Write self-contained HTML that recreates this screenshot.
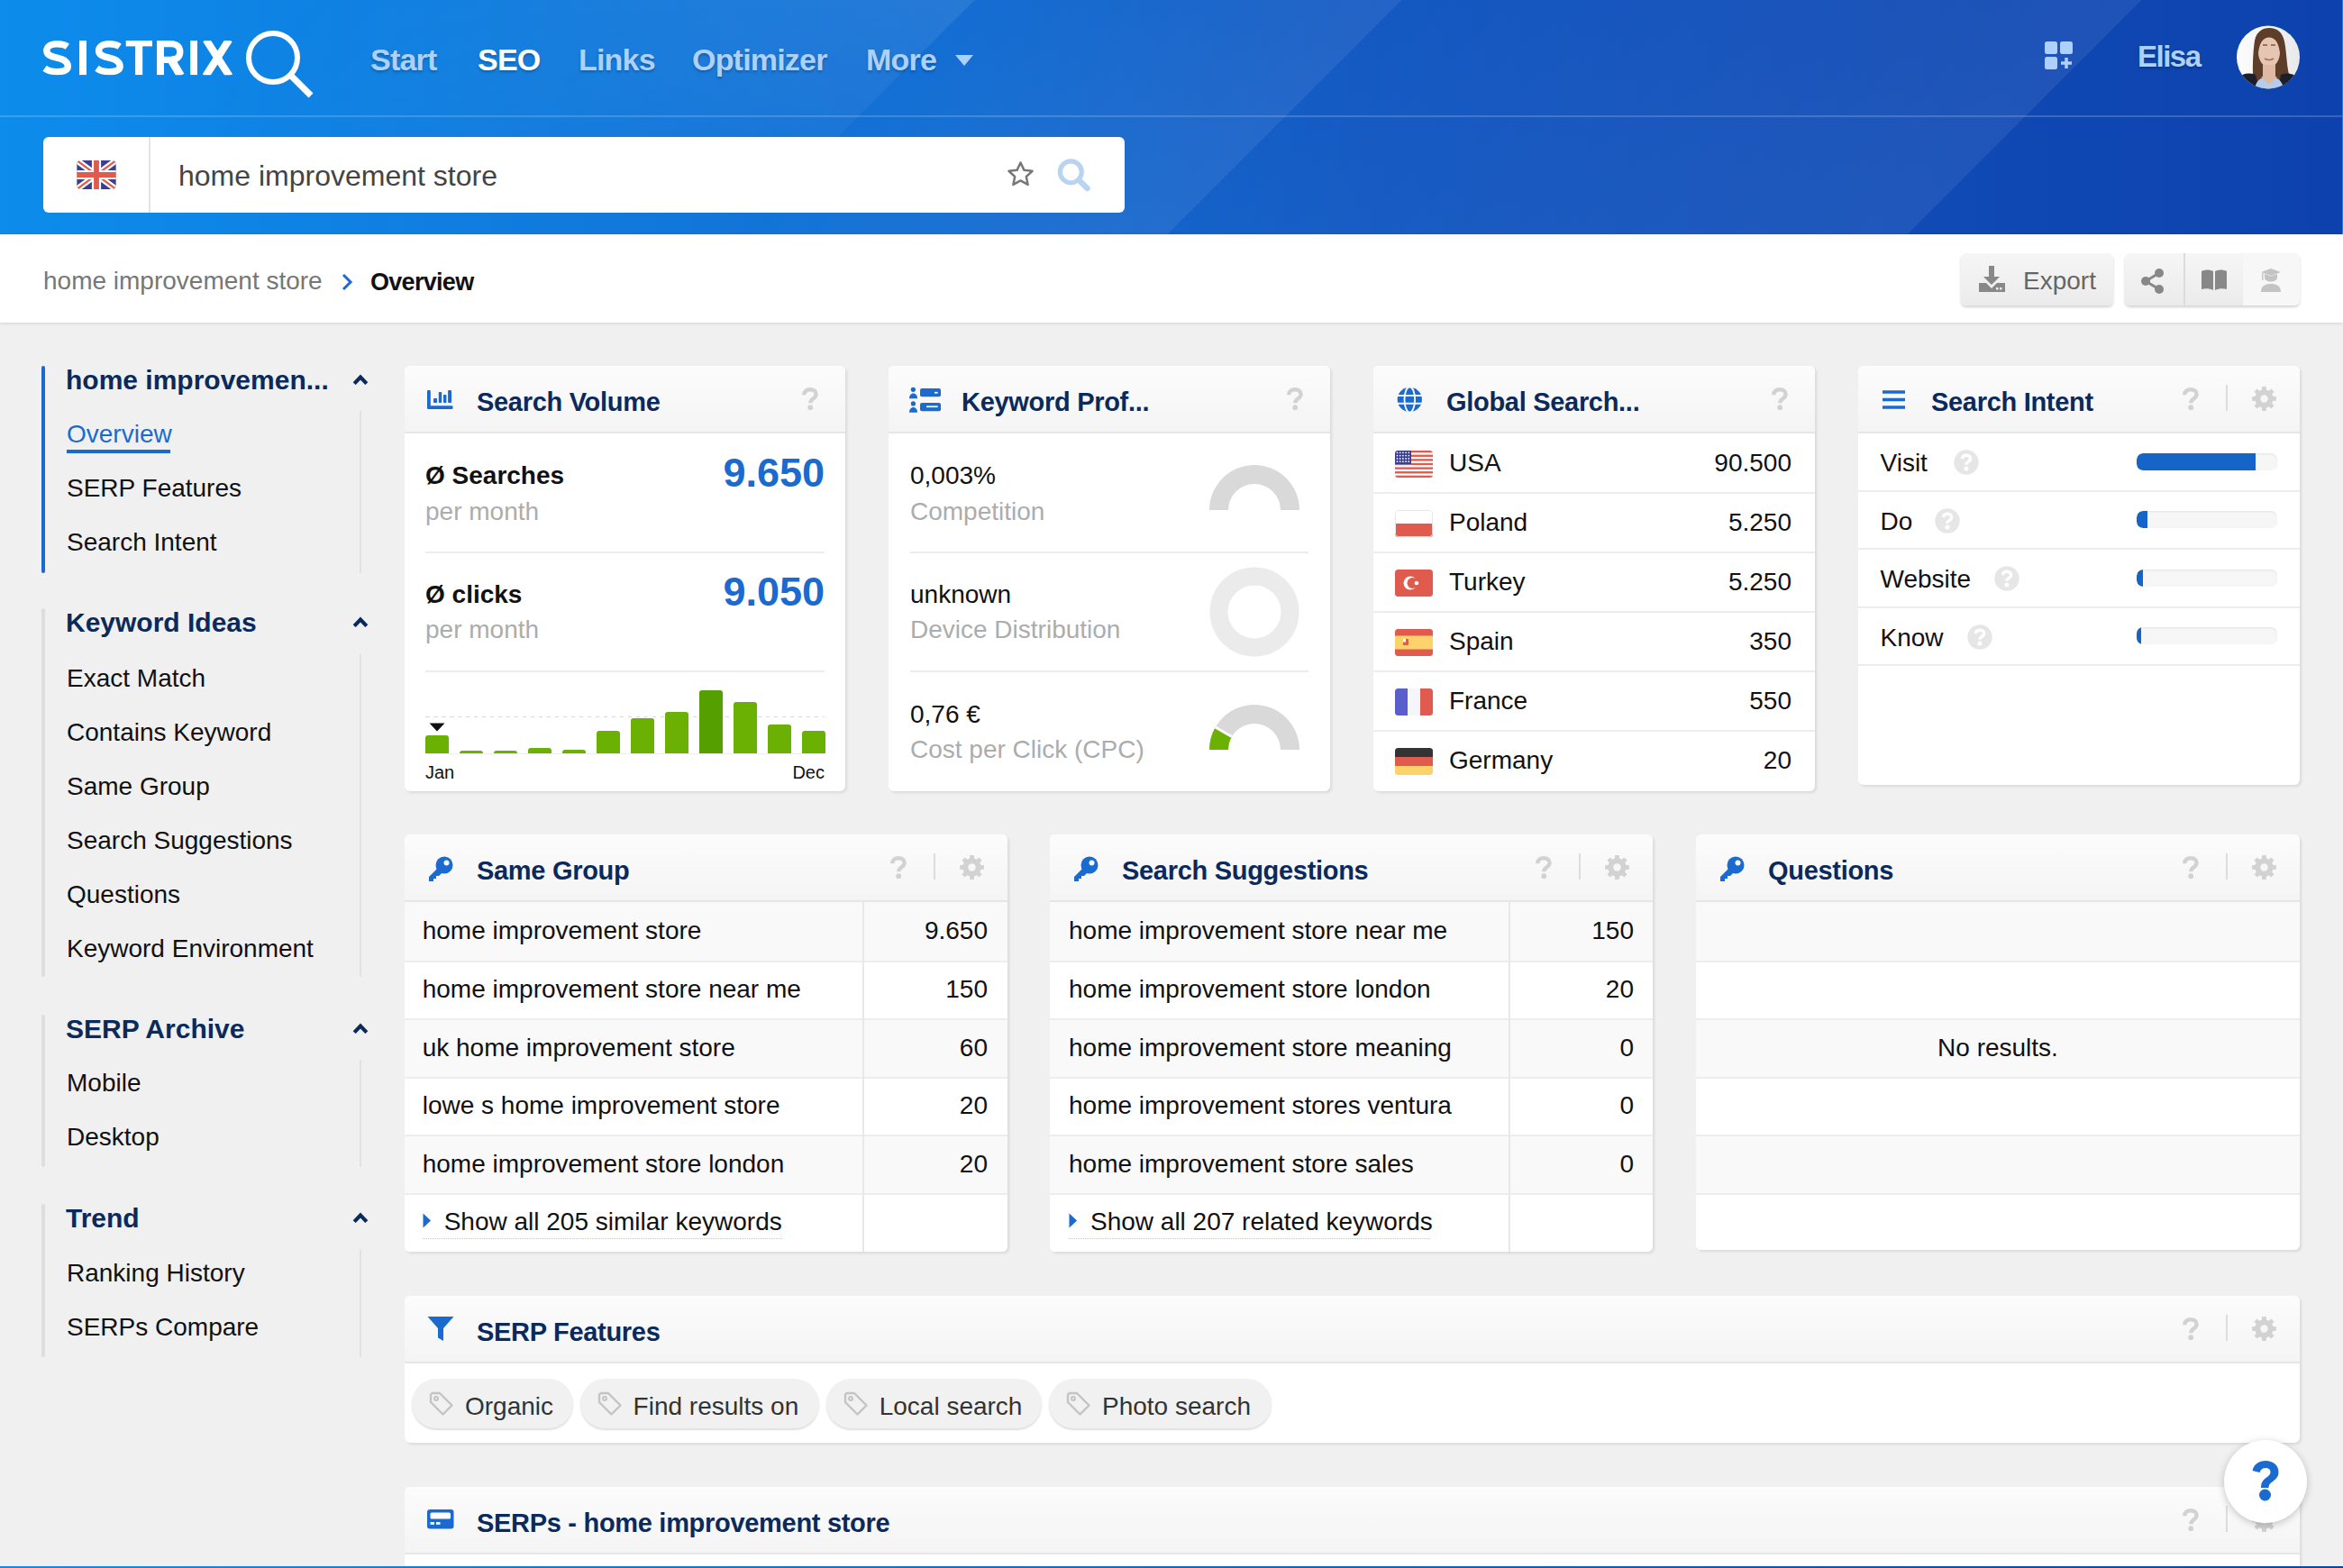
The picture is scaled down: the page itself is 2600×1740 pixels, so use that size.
<!DOCTYPE html>
<html><head><meta charset="utf-8">
<style>
*{box-sizing:border-box;margin:0;padding:0}
html,body{width:2600px;height:1740px;overflow:hidden}
body{position:relative;background:#f0f0f0;font-family:"Liberation Sans",sans-serif;color:#111;font-size:28px}
.abs{position:absolute}
.t{position:absolute;white-space:nowrap;line-height:28px}
/* header */
#hdr{position:absolute;left:0;top:0;width:2600px;height:260px;overflow:hidden;
 background:
  linear-gradient(135deg, rgba(255,255,255,0) 38%, rgba(255,255,255,0.065) 54.4%, rgba(255,255,255,0) 54.4%, rgba(255,255,255,0) 55%, rgba(255,255,255,0.07) 83.1%, rgba(255,255,255,0) 83.1%),
  linear-gradient(90deg,#0c8cec 0%,#146dd2 41.6%,#1459c2 58.8%,#0f47b2 88%,#0d42ae 100%);}
#hdr .band1{position:absolute;left:0;top:0;width:2600px;height:260px;
 background:linear-gradient(135deg, rgba(255,255,255,0) 12%, rgba(255,255,255,0.085) 37.8%, rgba(255,255,255,0) 37.8%);
 -webkit-mask-image:linear-gradient(to bottom,#000 0%,rgba(0,0,0,0.55) 45%,rgba(0,0,0,0) 85%);mask-image:linear-gradient(to bottom,#000 0%,rgba(0,0,0,0.55) 45%,rgba(0,0,0,0) 85%)}
#hdr .line{position:absolute;left:0;top:128px;width:2600px;height:2px;background:rgba(255,255,255,0.18)}
.nav{position:absolute;top:54px;font-weight:bold;font-size:34px;line-height:34px;letter-spacing:-0.8px;color:#aed1fb;text-shadow:0 2px 3px rgba(0,0,0,0.25)}
#search{position:absolute;left:48px;top:152px;width:1200px;height:84px;background:#fff;border-radius:6px}
#crumb{position:absolute;left:0;top:260px;width:2600px;height:98px;background:#fff;box-shadow:0 1px 3px rgba(0,0,0,0.12)}
.btn{position:absolute;background:linear-gradient(#f6f6f6,#ebebeb);border-radius:6px;box-shadow:0 2px 3px rgba(0,0,0,0.18)}
/* sidebar */
.sbar{position:absolute;left:46px;width:4px;background:#dedede;border-radius:2px}
.sline{position:absolute;left:399px;width:2px;background:#e2e2e2}
.shead{position:absolute;left:73px;font-weight:bold;font-size:30px;line-height:30px;color:#0b2a5c;white-space:nowrap}
.sitem{position:absolute;left:74px;font-size:28px;line-height:28px;color:#111;white-space:nowrap}
.chev{position:absolute;left:391px;width:18px;height:12px}
/* cards */
.card{position:absolute;background:#fff;border-radius:6px;box-shadow:2px 2px 3px rgba(0,0,0,0.09);overflow:hidden}
.ch{position:absolute;left:0;top:0;right:0;height:75px;background:linear-gradient(#fcfcfc,#f4f4f4);border-bottom:2px solid #e6e6e6}
.ctitle{position:absolute;top:28px;left:80px;font-weight:bold;font-size:28px;line-height:28px;color:#0b2a5c;white-space:nowrap}
</style></head><body>

<div id="hdr">
  <div class="band1"></div>
  <div class="line"></div>
  <svg class="abs" style="left:40px;top:40px" width="230" height="50" viewBox="40 40 230 50"><defs><clipPath id="lgc"><rect x="40" y="45" width="230" height="38.3"/></clipPath></defs><g clip-path="url(#lgc)"><path transform="translate(0 0)" d="M74.8 51.8 C71.5 49.4 67.5 48.8 63.2 48.8 C56.2 48.8 51.8 51.6 51.8 56.2 C51.8 61 56.2 62.6 63.2 64.1 C70.6 65.7 75.3 68.2 75.3 73.6 C75.3 78.4 70.6 79.7 63.2 79.7 C58 79.7 53.4 78.6 49.6 75.8" fill="none" stroke="#fff" stroke-width="7.4"/><rect x="88" y="45" width="8" height="38.3" fill="#fff"/><path transform="translate(57.8 0)" d="M74.8 51.8 C71.5 49.4 67.5 48.8 63.2 48.8 C56.2 48.8 51.8 51.6 51.8 56.2 C51.8 61 56.2 62.6 63.2 64.1 C70.6 65.7 75.3 68.2 75.3 73.6 C75.3 78.4 70.6 79.7 63.2 79.7 C58 79.7 53.4 78.6 49.6 75.8" fill="none" stroke="#fff" stroke-width="7.4"/><rect x="139.7" y="45" width="29.3" height="6.4" fill="#fff"/><rect x="150.1" y="45" width="8.1" height="38.3" fill="#fff"/><rect x="174" y="45" width="8" height="38.3" fill="#fff"/><path d="M176 48.6 H189.5 C196.5 48.6 199.8 52.4 199.8 57.6 C199.8 63 196.2 66.4 189.5 66.4 H176" fill="none" stroke="#fff" stroke-width="7.2"/><path d="M188.5 64 L200.5 84" stroke="#fff" stroke-width="9"/><rect x="211.2" y="45" width="7.8" height="38.3" fill="#fff"/><path d="M228.6 44 L254.6 84.5 M254.2 44 L228.2 84.5" stroke="#fff" stroke-width="8.2"/></g></svg>
  <svg class="abs" style="left:265px;top:26px" width="92" height="92" viewBox="265 26 92 92">
    <circle cx="303" cy="64" r="27" fill="none" stroke="#fff" stroke-width="6"/>
    <line x1="323" y1="84" x2="345" y2="106" stroke="#fff" stroke-width="7"/>
  </svg>
  <div class="nav" style="left:411px;top:49.2px">Start</div>
  <div class="nav" style="left:530px;top:49.2px;color:#fff">SEO</div>
  <div class="nav" style="left:642px;top:49.2px">Links</div>
  <div class="nav" style="left:768px;top:49.2px">Optimizer</div>
  <div class="nav" style="left:961px;top:49.2px">More</div>
  <svg class="abs" style="left:1058px;top:59px" width="24" height="16"><path d="M2 2 L22 2 L12 14 Z" fill="#aed1fb"/></svg>
  <svg class="abs" style="left:2266px;top:43px" width="38" height="36">
    <rect x="3" y="3" width="14" height="14" rx="2.5" fill="#aed1fb"/>
    <rect x="20" y="3" width="14" height="14" rx="2.5" fill="#aed1fb"/>
    <rect x="3" y="20" width="14" height="14" rx="2.5" fill="#aed1fb"/>
    <path d="M27 21 V33 M21 27 H33" stroke="#aed1fb" stroke-width="3.5"/>
  </svg>
  <div class="nav" style="left:2372px;top:45.6px;font-size:33px;line-height:33px;letter-spacing:-1.5px">Elisa</div>
  <svg class="abs" style="left:2481px;top:28px" width="72" height="72" viewBox="0 0 72 72">
    <defs><clipPath id="av"><circle cx="36" cy="35.5" r="35"/></clipPath>
    <linearGradient id="avbg" x1="0" x2="1"><stop offset="0" stop-color="#fdfdfd"/><stop offset="1" stop-color="#e9e9ea"/></linearGradient></defs>
    <g clip-path="url(#av)">
      <rect width="72" height="72" fill="url(#avbg)"/>
      <path d="M20 72 C18 52 19 30 21 17 C23 7 30 3 37 3 C46 3 52 8 54 18 C57 32 56 50 62 64 L50 72 Z" fill="#5e3d2a"/>
      <ellipse cx="37" cy="30" rx="12" ry="16.5" fill="#e6c6b2"/>
      <path d="M23 28 C24 12 30 6 37 6 L36 12 C31 13 27 18 25 30 Z" fill="#5e3d2a"/>
      <path d="M51 28 C50 12 44 6 37 6 L38 12 C43 13 47 18 49 30 Z" fill="#5e3d2a"/>
      <path d="M30 22 H35 M39 22 H44" stroke="#7a5845" stroke-width="1.6"/>
      <path d="M32 37 Q37 40 42 37" stroke="#a0705e" stroke-width="1.5" fill="none"/>
      <rect x="30" y="44" width="14" height="14" fill="#e0b9a2"/>
      <path d="M0 72 V60 C6 54 14 52 22 55 L26 72 Z" fill="#1c1e2a"/>
      <path d="M72 72 V60 C66 54 58 52 50 55 L47 72 Z" fill="#1c1e2a"/>
      <path d="M21 72 C22 62 27 57 37 57 C47 57 52 62 53 72 Z" fill="#b5cdea"/>
      <path d="M28 57 L37 66 L46 57 Z" fill="#e0b9a2"/>
    </g>
  </svg>
</div>

<div id="search">
  <div class="abs" style="left:117px;top:0;width:2px;height:84px;background:#e3e3e3"></div>
  <svg class="abs" style="left:37px;top:26px" width="44" height="32" viewBox="0 0 60 44">
    <defs><clipPath id="ukc"><rect width="60" height="44" rx="6"/></clipPath></defs>
    <g clip-path="url(#ukc)">
      <rect width="60" height="44" fill="#3b3f93"/>
      <path d="M0 0 L60 44 M60 0 L0 44" stroke="#fff" stroke-width="9"/>
      <path d="M0 0 L60 44 M60 0 L0 44" stroke="#e05a4e" stroke-width="3"/>
      <path d="M30 0 V44 M0 22 H60" stroke="#fff" stroke-width="14"/>
      <path d="M30 0 V44 M0 22 H60" stroke="#e05a4e" stroke-width="8"/>
    </g>
  </svg>
  <div class="t" style="left:150px;top:27px;font-size:32px;line-height:32px;color:#444">home improvement store</div>
  <svg class="abs" style="left:1068px;top:25px" width="33" height="34" viewBox="0 0 24 24.7">
    <path d="M12 2.5 L14.9 8.6 L21.5 9.3 L16.6 13.8 L17.9 20.3 L12 17 L6.1 20.3 L7.4 13.8 L2.5 9.3 L9.1 8.6 Z" fill="none" stroke="#777" stroke-width="1.8" stroke-linejoin="round"/>
  </svg>
  <svg class="abs" style="left:1125px;top:23px" width="40" height="40" viewBox="0 0 40 40">
    <circle cx="15.3" cy="15.8" r="12" fill="none" stroke="#b9d4f0" stroke-width="5.2"/>
    <line x1="24.5" y1="25" x2="33.5" y2="34" stroke="#b9d4f0" stroke-width="6.4" stroke-linecap="round"/>
  </svg>
</div>

<div id="crumb">
  <div class="t" style="left:48px;top:38px;color:#777">home improvement store</div>
  <svg class="abs" style="left:376px;top:42px" width="18" height="22"><path d="M5 3 L13 11 L5 19" fill="none" stroke="#1a6ad0" stroke-width="3"/></svg>
  <div class="t" style="left:411px;top:39px;font-weight:bold;font-size:27px;letter-spacing:-0.7px;color:#111">Overview</div>
  <div class="btn" style="left:2176px;top:21px;width:169px;height:58px">
    <svg class="abs" style="left:19px;top:13px" width="32" height="32" viewBox="0 0 32 32">
      <path d="M12 1 H18 V13 H24 L15 22 L6 13 H12 Z" fill="#888"/>
      <path d="M1 20 H9 L15 26 L21 20 H30 V30 H1 Z" fill="#888"/>
      <rect x="20" y="25" width="2.5" height="2.5" fill="#eee"/><rect x="24" y="25" width="2.5" height="2.5" fill="#eee"/>
    </svg>
    <div class="t" style="left:69px;top:17px;color:#666">Export</div>
  </div>
  <div class="btn" style="left:2358px;top:21px;width:194px;height:58px">
    <div class="abs" style="left:65px;top:0;width:2px;height:58px;background:#dcdcdc"></div>
    <div class="abs" style="left:131px;top:0;width:63px;height:58px;background:#f7f7f7;border-radius:0 6px 6px 0"></div>
    <svg class="abs" style="left:17px;top:16px" width="28" height="30" viewBox="0 0 28 30">
      <circle cx="21" cy="6" r="5" fill="#888"/><circle cx="6" cy="15" r="5" fill="#888"/><circle cx="21" cy="24" r="5" fill="#888"/>
      <path d="M21 6 L6 15 L21 24" fill="none" stroke="#888" stroke-width="3"/>
    </svg>
    <svg class="abs" style="left:84px;top:18px" width="30" height="24" viewBox="0 0 30 24">
      <path d="M1 2 C5 0 10 0 14 2 V23 C10 21 5 21 1 22 Z" fill="#888"/>
      <path d="M29 2 C25 0 20 0 16 2 V23 C20 21 25 21 29 22 Z" fill="#888"/>
    </svg>
    <svg class="abs" style="left:149px;top:16px" width="26" height="28" viewBox="0 0 26 28">
      <path d="M2 5 L13 1 L24 5 L13 9 Z" fill="#c4c4c4"/>
      <path d="M6 7 V11 C6 17 20 17 20 11 V7 L13 9.5 Z" fill="#c4c4c4"/>
      <rect x="3" y="6" width="1.5" height="8" fill="#c4c4c4"/>
      <path d="M2 27 C2 20 7 18 13 18 C19 18 24 20 24 27 Z" fill="#c4c4c4"/>
    </svg>
  </div>
</div>


<!-- sidebar -->
<div class="sbar" style="top:406px;height:230px;background:#1a6ad0"></div>
<div class="sline" style="top:456px;height:180px"></div>
<div class="shead" style="top:406.6px">home improvemen...</div>
<svg class="chev" style="top:415px" viewBox="0 0 18 12"><path d="M2.2 10.6 L9 3.6 L15.8 10.6" fill="none" stroke="#0b2a5c" stroke-width="4.2"/></svg>
<div class="sitem" style="top:468.3px;color:#1a6ad0">Overview</div>
<div class="abs" style="left:74px;top:499px;width:115px;height:4px;background:#1a6ad0"></div>
<div class="sitem" style="top:528.3px">SERP Features</div>
<div class="sitem" style="top:588.3px">Search Intent</div>
<div class="sbar" style="top:675px;height:409px"></div>
<div class="sline" style="top:726px;height:358px"></div>
<div class="shead" style="top:675.6px">Keyword Ideas</div>
<svg class="chev" style="top:684px" viewBox="0 0 18 12"><path d="M2.2 10.6 L9 3.6 L15.8 10.6" fill="none" stroke="#0b2a5c" stroke-width="4.2"/></svg>
<div class="sitem" style="top:739.3px">Exact Match</div>
<div class="sitem" style="top:799.3px">Contains Keyword</div>
<div class="sitem" style="top:859.3px">Same Group</div>
<div class="sitem" style="top:919.3px">Search Suggestions</div>
<div class="sitem" style="top:979.3px">Questions</div>
<div class="sitem" style="top:1039.3px">Keyword Environment</div>
<div class="sbar" style="top:1126px;height:169px"></div>
<div class="sline" style="top:1176px;height:119px"></div>
<div class="shead" style="top:1126.6px">SERP Archive</div>
<svg class="chev" style="top:1135px" viewBox="0 0 18 12"><path d="M2.2 10.6 L9 3.6 L15.8 10.6" fill="none" stroke="#0b2a5c" stroke-width="4.2"/></svg>
<div class="sitem" style="top:1188.3px">Mobile</div>
<div class="sitem" style="top:1248.3px">Desktop</div>
<div class="sbar" style="top:1336px;height:170px"></div>
<div class="sline" style="top:1386px;height:120px"></div>
<div class="shead" style="top:1336.6px">Trend</div>
<svg class="chev" style="top:1345px" viewBox="0 0 18 12"><path d="M2.2 10.6 L9 3.6 L15.8 10.6" fill="none" stroke="#0b2a5c" stroke-width="4.2"/></svg>
<div class="sitem" style="top:1399.3px">Ranking History</div>
<div class="sitem" style="top:1459.3px">SERPs Compare</div>

<!-- cards -->
<div class="card" style="left:449px;top:406px;width:489px;height:472px"><div class="ch"></div><svg class="abs" style="left:25px;top:27px" width="30" height="22" viewBox="0 0 30 22"><path d="M0 1 Q0 0 1 0 H2.8 Q3.8 0 3.8 1 V17.2 H27.6 Q28.6 17.2 28.6 19.1 Q28.6 21 27.6 21 H1 Q0 21 0 20 Z" fill="#1a6ad0"/><rect x="7" y="9" width="4" height="5" rx="0.8" fill="#1a6ad0"/><rect x="12.8" y="2" width="3.4" height="12" rx="0.8" fill="#1a6ad0"/><rect x="18" y="5" width="3.4" height="9" rx="0.8" fill="#1a6ad0"/><rect x="23.1" y="0" width="3.9" height="14" rx="0.9" fill="#1a6ad0"/></svg><div class="ctitle" style="left:80px;top:25.5px;font-size:29px;line-height:29px;letter-spacing:-0.3px">Search Volume</div><svg class="abs" style="left:440px;top:23.5px" width="20" height="26" viewBox="0 0 20 26"><path d="M3.2 8.2 C3.2 4.2 6.2 2.2 10 2.2 C14 2.2 16.6 4.6 16.6 7.6 C16.6 10.6 14.2 11.8 12.6 13 C11 14.2 10.4 15.2 10.4 17.2" fill="none" stroke="#d2d2d2" stroke-width="4.4"/><circle cx="10.2" cy="22.2" r="2.9" fill="#d2d2d2"/></svg>
<div class="t" style="left:23.0px;top:107.9px;font-size:28px;line-height:28px;color:#111;font-weight:bold;">&Oslash; Searches</div>
<div class="t" style="left:23.0px;top:147.8px;font-size:28px;line-height:28px;color:#acacac;font-weight:normal;">per month</div>
<div class="t" style="right:23px;top:96.4px;font-size:45px;line-height:45px;font-weight:bold;color:#1a6ad0">9.650</div>
<div class="abs" style="left:23px;top:205.5px;width:443px;height:2px;background:#ececec"></div>
<div class="t" style="left:23.0px;top:240.3px;font-size:28px;line-height:28px;color:#111;font-weight:bold;">&Oslash; clicks</div>
<div class="t" style="left:23.0px;top:279.3px;font-size:28px;line-height:28px;color:#acacac;font-weight:normal;">per month</div>
<div class="t" style="right:23px;top:227.9px;font-size:45px;line-height:45px;font-weight:bold;color:#1a6ad0">9.050</div>
<div class="abs" style="left:23px;top:337.5px;width:443px;height:2px;background:#ececec"></div>
<div class="abs" style="left:23px;top:388.5px;width:443px;height:1.5px;background:repeating-linear-gradient(90deg,#d8d8d8 0 4.5px,transparent 4.5px 9px)"></div>
<div class="abs" style="left:23.0px;top:409.6px;width:26px;height:20.1px;background:#6ab104;border-radius:3px 3px 0 0"></div>
<div class="abs" style="left:60.5px;top:426.5px;width:26px;height:3.2px;background:#6ab104;border-radius:3px 3px 0 0"></div>
<div class="abs" style="left:98.7px;top:426.5px;width:26px;height:3.2px;background:#6ab104;border-radius:3px 3px 0 0"></div>
<div class="abs" style="left:137.0px;top:424.0px;width:26px;height:5.7px;background:#6ab104;border-radius:3px 3px 0 0"></div>
<div class="abs" style="left:175.0px;top:425.5px;width:26px;height:4.2px;background:#6ab104;border-radius:3px 3px 0 0"></div>
<div class="abs" style="left:213.0px;top:404.8px;width:26px;height:24.9px;background:#6ab104;border-radius:3px 3px 0 0"></div>
<div class="abs" style="left:250.8px;top:391.4px;width:26px;height:38.3px;background:#6ab104;border-radius:3px 3px 0 0"></div>
<div class="abs" style="left:289.0px;top:384.0px;width:26px;height:45.7px;background:#6ab104;border-radius:3px 3px 0 0"></div>
<div class="abs" style="left:327.3px;top:360.0px;width:26px;height:69.7px;background:#559f00;border-radius:3px 3px 0 0"></div>
<div class="abs" style="left:364.6px;top:373.0px;width:26px;height:56.7px;background:#6ab104;border-radius:3px 3px 0 0"></div>
<div class="abs" style="left:402.9px;top:398.4px;width:26px;height:31.3px;background:#6ab104;border-radius:3px 3px 0 0"></div>
<div class="abs" style="left:441.0px;top:404.8px;width:26px;height:24.9px;background:#6ab104;border-radius:3px 3px 0 0"></div>
<div class="abs" style="left:23px;top:429.7px;width:443px;height:1px;background:#eee"></div>
<svg class="abs" style="left:27px;top:396px" width="18" height="10" viewBox="0 0 18 10"><path d="M0.5 0.5 H17.5 L9 9.5 Z" fill="#111"/></svg>
<div class="t" style="left:23.0px;top:440.5px;font-size:20px;line-height:20px;color:#111;font-weight:normal;">Jan</div>
<div class="t" style="right:23px;top:440.5px;font-size:20px;line-height:20px">Dec</div>
</div>
<div class="card" style="left:986px;top:406px;width:490px;height:472px"><div class="ch"></div><svg class="abs" style="left:23px;top:24px" width="36" height="29" viewBox="0 0 36 29"><circle cx="4.4" cy="2.3" r="2.6" fill="#1a6ad0"/><path d="M0 12.2 C0 8.6 2 6.4 4.5 6.4 C7 6.4 9 8.6 9 12.2 Z" fill="#1a6ad0"/><circle cx="4.4" cy="17.9" r="2.6" fill="#1a6ad0"/><path d="M0 27.8 C0 24.2 2 22 4.5 22 C7 22 9 24.2 9 27.8 Z" fill="#1a6ad0"/><rect x="12" y="1" width="23" height="9.2" rx="2" fill="#1a6ad0"/><rect x="28" y="4.9" width="3.7" height="1.7" fill="#fff"/><rect x="12" y="17" width="23" height="9.2" rx="2" fill="#1a6ad0"/><rect x="19" y="20.4" width="12.7" height="1.7" fill="#fff"/></svg><div class="ctitle" style="left:81px;top:25.5px;font-size:29px;line-height:29px;letter-spacing:-0.3px">Keyword Prof...</div><svg class="abs" style="left:441px;top:23.5px" width="20" height="26" viewBox="0 0 20 26"><path d="M3.2 8.2 C3.2 4.2 6.2 2.2 10 2.2 C14 2.2 16.6 4.6 16.6 7.6 C16.6 10.6 14.2 11.8 12.6 13 C11 14.2 10.4 15.2 10.4 17.2" fill="none" stroke="#d2d2d2" stroke-width="4.4"/><circle cx="10.2" cy="22.2" r="2.9" fill="#d2d2d2"/></svg>
<div class="t" style="left:24.0px;top:107.9px;font-size:28px;line-height:28px;color:#111;font-weight:normal;">0,003%</div>
<div class="t" style="left:24.0px;top:147.8px;font-size:28px;line-height:28px;color:#acacac;font-weight:normal;">Competition</div>
<div class="abs" style="left:24px;top:205.5px;width:442px;height:2px;background:#ececec"></div>
<div class="t" style="left:24.0px;top:240.3px;font-size:28px;line-height:28px;color:#111;font-weight:normal;">unknown</div>
<div class="t" style="left:24.0px;top:279.3px;font-size:28px;line-height:28px;color:#acacac;font-weight:normal;">Device Distribution</div>
<div class="abs" style="left:24px;top:337.5px;width:442px;height:2px;background:#ececec"></div>
<div class="t" style="left:24.0px;top:373.3px;font-size:28px;line-height:28px;color:#111;font-weight:normal;">0,76 &euro;</div>
<div class="t" style="left:24.0px;top:412.3px;font-size:28px;line-height:28px;color:#acacac;font-weight:normal;">Cost per Click (CPC)</div>
<svg class="abs" style="left:356px;top:110px" width="100" height="52" viewBox="0 0 100 52"><path d="M0 50 A50 50 0 0 1 100 50 H79 A29 29 0 0 0 21 50 Z" fill="#d9d9d9"/></svg>
<svg class="abs" style="left:356px;top:222.5px" width="100" height="100" viewBox="0 0 100 100"><circle cx="50" cy="50" r="39.5" fill="none" stroke="#ebebeb" stroke-width="20"/></svg>
<svg class="abs" style="left:356px;top:375.5px" width="100" height="52" viewBox="0 0 100 52"><path d="M0 50 A50 50 0 0 1 100 50 H79 A29 29 0 0 0 21 50 Z" fill="#d9d9d9"/><path d="M0 50 A50 50 0 0 1 6.7 25 L24.9 35.5 A29 29 0 0 0 21 50 Z" fill="#6ab104"/><path d="M6.7 25 L24.9 35.5" stroke="#fff" stroke-width="3"/></svg>
</div>
<div class="card" style="left:1524px;top:406px;width:490px;height:472px"><div class="ch"></div><svg class="abs" style="left:25px;top:24px" width="31" height="29" viewBox="0 0 31 29"><circle cx="15.3" cy="13.4" r="13.6" fill="#1a6ad0"/><ellipse cx="15.3" cy="13.4" rx="5.8" ry="14.2" fill="none" stroke="#f8f8f8" stroke-width="1.9"/><path d="M0 8.9 H31 M0 17.8 H31" stroke="#f8f8f8" stroke-width="2"/></svg><div class="ctitle" style="left:81px;top:25.5px;font-size:29px;line-height:29px;letter-spacing:-0.3px">Global Search...</div><svg class="abs" style="left:441px;top:23.5px" width="20" height="26" viewBox="0 0 20 26"><path d="M3.2 8.2 C3.2 4.2 6.2 2.2 10 2.2 C14 2.2 16.6 4.6 16.6 7.6 C16.6 10.6 14.2 11.8 12.6 13 C11 14.2 10.4 15.2 10.4 17.2" fill="none" stroke="#d2d2d2" stroke-width="4.4"/><circle cx="10.2" cy="22.2" r="2.9" fill="#d2d2d2"/></svg>
<svg class="abs" style="left:24px;top:94px" width="42" height="30" viewBox="0 0 42 30"><defs><clipPath id="fc0"><rect width="42" height="30" rx="3.5"/></clipPath></defs><g clip-path="url(#fc0)"><rect width="42" height="30" fill="#fff"/><rect y="0.00" width="42" height="2.31" fill="#e05a4e"/><rect y="4.62" width="42" height="2.31" fill="#e05a4e"/><rect y="9.23" width="42" height="2.31" fill="#e05a4e"/><rect y="13.85" width="42" height="2.31" fill="#e05a4e"/><rect y="18.46" width="42" height="2.31" fill="#e05a4e"/><rect y="23.08" width="42" height="2.31" fill="#e05a4e"/><rect y="27.69" width="42" height="2.31" fill="#e05a4e"/><rect width="18" height="15" fill="#3b3f93"/><circle cx="2.5" cy="2.3" r="0.9" fill="#fff"/><circle cx="5.7" cy="2.3" r="0.9" fill="#fff"/><circle cx="8.9" cy="2.3" r="0.9" fill="#fff"/><circle cx="12.1" cy="2.3" r="0.9" fill="#fff"/><circle cx="15.3" cy="2.3" r="0.9" fill="#fff"/><circle cx="2.5" cy="5.6" r="0.9" fill="#fff"/><circle cx="5.7" cy="5.6" r="0.9" fill="#fff"/><circle cx="8.9" cy="5.6" r="0.9" fill="#fff"/><circle cx="12.1" cy="5.6" r="0.9" fill="#fff"/><circle cx="15.3" cy="5.6" r="0.9" fill="#fff"/><circle cx="2.5" cy="8.9" r="0.9" fill="#fff"/><circle cx="5.7" cy="8.9" r="0.9" fill="#fff"/><circle cx="8.9" cy="8.9" r="0.9" fill="#fff"/><circle cx="12.1" cy="8.9" r="0.9" fill="#fff"/><circle cx="15.3" cy="8.9" r="0.9" fill="#fff"/><circle cx="2.5" cy="12.2" r="0.9" fill="#fff"/><circle cx="5.7" cy="12.2" r="0.9" fill="#fff"/><circle cx="8.9" cy="12.2" r="0.9" fill="#fff"/><circle cx="12.1" cy="12.2" r="0.9" fill="#fff"/><circle cx="15.3" cy="12.2" r="0.9" fill="#fff"/></g></svg>
<div class="t" style="left:84.0px;top:94.3px;font-size:28px;line-height:28px;color:#111;font-weight:normal;">USA</div>
<div class="t" style="right:26px;top:94.3px">90.500</div>
<div class="abs" style="left:0;top:140px;width:490px;height:2px;background:#ededed"></div>
<svg class="abs" style="left:24px;top:160px" width="42" height="30" viewBox="0 0 42 30"><defs><clipPath id="fc1"><rect width="42" height="30" rx="3.5"/></clipPath></defs><g clip-path="url(#fc1)"><rect width="42" height="15" fill="#fff"/><rect y="15" width="42" height="15" fill="#e05a4e"/><rect x="0.5" y="0.5" width="41" height="29" rx="3" fill="none" stroke="#e8e8e8"/></g></svg>
<div class="t" style="left:84.0px;top:160.3px;font-size:28px;line-height:28px;color:#111;font-weight:normal;">Poland</div>
<div class="t" style="right:26px;top:160.3px">5.250</div>
<div class="abs" style="left:0;top:206px;width:490px;height:2px;background:#ededed"></div>
<svg class="abs" style="left:24px;top:226px" width="42" height="30" viewBox="0 0 42 30"><defs><clipPath id="fc2"><rect width="42" height="30" rx="3.5"/></clipPath></defs><g clip-path="url(#fc2)"><rect width="42" height="30" fill="#e05a4e"/><circle cx="17" cy="15" r="7.5" fill="#fff"/><circle cx="19.5" cy="15" r="6" fill="#e05a4e"/><circle cx="24" cy="15" r="2.3" fill="#fff"/></g></svg>
<div class="t" style="left:84.0px;top:226.3px;font-size:28px;line-height:28px;color:#111;font-weight:normal;">Turkey</div>
<div class="t" style="right:26px;top:226.3px">5.250</div>
<div class="abs" style="left:0;top:272px;width:490px;height:2px;background:#ededed"></div>
<svg class="abs" style="left:24px;top:292px" width="42" height="30" viewBox="0 0 42 30"><defs><clipPath id="fc3"><rect width="42" height="30" rx="3.5"/></clipPath></defs><g clip-path="url(#fc3)"><rect width="42" height="30" fill="#e05a4e"/><rect y="7.5" width="42" height="15" fill="#fbd36a"/><rect x="9" y="11" width="6" height="7" rx="1" fill="#e05a4e"/><rect x="9" y="11" width="3" height="3.5" fill="#fff"/></g></svg>
<div class="t" style="left:84.0px;top:292.3px;font-size:28px;line-height:28px;color:#111;font-weight:normal;">Spain</div>
<div class="t" style="right:26px;top:292.3px">350</div>
<div class="abs" style="left:0;top:338px;width:490px;height:2px;background:#ededed"></div>
<svg class="abs" style="left:24px;top:358px" width="42" height="30" viewBox="0 0 42 30"><defs><clipPath id="fc4"><rect width="42" height="30" rx="3.5"/></clipPath></defs><g clip-path="url(#fc4)"><rect width="14" height="30" fill="#5a5fcb"/><rect x="14" width="14" height="30" fill="#f4f6fb"/><rect x="28" width="14" height="30" fill="#e05a4e"/></g></svg>
<div class="t" style="left:84.0px;top:358.3px;font-size:28px;line-height:28px;color:#111;font-weight:normal;">France</div>
<div class="t" style="right:26px;top:358.3px">550</div>
<div class="abs" style="left:0;top:404px;width:490px;height:2px;background:#ededed"></div>
<svg class="abs" style="left:24px;top:424px" width="42" height="30" viewBox="0 0 42 30"><defs><clipPath id="fc5"><rect width="42" height="30" rx="3.5"/></clipPath></defs><g clip-path="url(#fc5)"><rect width="42" height="10" fill="#333"/><rect y="10" width="42" height="10" fill="#e05a4e"/><rect y="20" width="42" height="10" fill="#fbd36a"/></g></svg>
<div class="t" style="left:84.0px;top:424.3px;font-size:28px;line-height:28px;color:#111;font-weight:normal;">Germany</div>
<div class="t" style="right:26px;top:424.3px">20</div>
</div>
<div class="card" style="left:2062px;top:406px;width:490px;height:465px"><div class="ch"></div><svg class="abs" style="left:27px;top:27px" width="26" height="22" viewBox="0 0 26 22"><path d="M0 2 H25 M0 10.5 H25 M0 19 H25" stroke="#1a6ad0" stroke-width="3.4"/></svg><div class="ctitle" style="left:81px;top:25.5px;font-size:29px;line-height:29px;letter-spacing:-0.3px">Search Intent</div><svg class="abs" style="left:359px;top:23.5px" width="20" height="26" viewBox="0 0 20 26"><path d="M3.2 8.2 C3.2 4.2 6.2 2.2 10 2.2 C14 2.2 16.6 4.6 16.6 7.6 C16.6 10.6 14.2 11.8 12.6 13 C11 14.2 10.4 15.2 10.4 17.2" fill="none" stroke="#d2d2d2" stroke-width="4.4"/><circle cx="10.2" cy="22.2" r="2.9" fill="#d2d2d2"/></svg><div class="abs" style="left:408px;top:21px;width:2px;height:29px;background:#dcdcdc"></div><svg class="abs" style="left:437px;top:23px" width="27" height="27" viewBox="0 0 27 27"><path d="M22.97 10.98 L26.90 11.20 L26.90 15.80 L22.97 16.02 L21.98 18.42 L24.60 21.35 L21.35 24.60 L18.42 21.98 L16.02 22.97 L15.80 26.90 L11.20 26.90 L10.98 22.97 L8.58 21.98 L5.65 24.60 L2.40 21.35 L5.02 18.42 L4.03 16.02 L0.10 15.80 L0.10 11.20 L4.03 10.98 L5.02 8.58 L2.40 5.65 L5.65 2.40 L8.58 5.02 L10.98 4.03 L11.20 0.10 L15.80 0.10 L16.02 4.03 L18.42 5.02 L21.35 2.40 L24.60 5.65 L21.98 8.58 Z" fill="#d2d2d2"/><circle cx="13.5" cy="13.5" r="10.2" fill="#d2d2d2"/><circle cx="13.5" cy="13.5" r="4.2" fill="#f7f7f7"/></svg>
<div class="abs" style="left:0;top:137.5px;width:490px;height:2px;background:#ededed"></div>
<div class="t" style="left:24.5px;top:94.3px;font-size:28px;line-height:28px;color:#111;font-weight:normal;">Visit</div>
<svg class="abs" style="left:106.0px;top:93.0px" width="28" height="28" viewBox="0 0 28 28"><circle cx="14" cy="14" r="13.7" fill="#e6e6e6"/><path d="M9.2 10 C9.8 7.4 11.7 6.2 14.1 6.2 C16.8 6.2 18.6 7.8 18.6 10.1 C18.6 12.2 17 13.1 15.5 13.9 C14.3 14.6 13.9 15.3 13.9 16.8" fill="none" stroke="#fff" stroke-width="3.4"/><circle cx="13.9" cy="21" r="2.5" fill="#fff"/></svg>
<div class="abs" style="left:309px;top:96.5px;width:156px;height:19px;border-radius:7px;background:#f6f6f6;box-shadow:inset 0 1px 2px rgba(0,0,0,0.08);overflow:hidden"><div style="width:132.4px;height:19px;background:#1565c9;border-radius:7px 0 0 7px"></div></div>
<div class="abs" style="left:0;top:202.0px;width:490px;height:2px;background:#ededed"></div>
<div class="t" style="left:24.5px;top:158.8px;font-size:28px;line-height:28px;color:#111;font-weight:normal;">Do</div>
<svg class="abs" style="left:85.4px;top:157.5px" width="28" height="28" viewBox="0 0 28 28"><circle cx="14" cy="14" r="13.7" fill="#e6e6e6"/><path d="M9.2 10 C9.8 7.4 11.7 6.2 14.1 6.2 C16.8 6.2 18.6 7.8 18.6 10.1 C18.6 12.2 17 13.1 15.5 13.9 C14.3 14.6 13.9 15.3 13.9 16.8" fill="none" stroke="#fff" stroke-width="3.4"/><circle cx="13.9" cy="21" r="2.5" fill="#fff"/></svg>
<div class="abs" style="left:309px;top:161.0px;width:156px;height:19px;border-radius:7px;background:#f6f6f6;box-shadow:inset 0 1px 2px rgba(0,0,0,0.08);overflow:hidden"><div style="width:12.0px;height:19px;background:#1565c9;border-radius:7px 0 0 7px"></div></div>
<div class="abs" style="left:0;top:266.5px;width:490px;height:2px;background:#ededed"></div>
<div class="t" style="left:24.5px;top:223.3px;font-size:28px;line-height:28px;color:#111;font-weight:normal;">Website</div>
<svg class="abs" style="left:151.0px;top:222.0px" width="28" height="28" viewBox="0 0 28 28"><circle cx="14" cy="14" r="13.7" fill="#e6e6e6"/><path d="M9.2 10 C9.8 7.4 11.7 6.2 14.1 6.2 C16.8 6.2 18.6 7.8 18.6 10.1 C18.6 12.2 17 13.1 15.5 13.9 C14.3 14.6 13.9 15.3 13.9 16.8" fill="none" stroke="#fff" stroke-width="3.4"/><circle cx="13.9" cy="21" r="2.5" fill="#fff"/></svg>
<div class="abs" style="left:309px;top:225.5px;width:156px;height:19px;border-radius:7px;background:#f6f6f6;box-shadow:inset 0 1px 2px rgba(0,0,0,0.08);overflow:hidden"><div style="width:7.0px;height:19px;background:#1565c9;border-radius:7px 0 0 7px"></div></div>
<div class="abs" style="left:0;top:331.0px;width:490px;height:2px;background:#ededed"></div>
<div class="t" style="left:24.5px;top:287.8px;font-size:28px;line-height:28px;color:#111;font-weight:normal;">Know</div>
<svg class="abs" style="left:120.5px;top:286.5px" width="28" height="28" viewBox="0 0 28 28"><circle cx="14" cy="14" r="13.7" fill="#e6e6e6"/><path d="M9.2 10 C9.8 7.4 11.7 6.2 14.1 6.2 C16.8 6.2 18.6 7.8 18.6 10.1 C18.6 12.2 17 13.1 15.5 13.9 C14.3 14.6 13.9 15.3 13.9 16.8" fill="none" stroke="#fff" stroke-width="3.4"/><circle cx="13.9" cy="21" r="2.5" fill="#fff"/></svg>
<div class="abs" style="left:309px;top:290.0px;width:156px;height:19px;border-radius:7px;background:#f6f6f6;box-shadow:inset 0 1px 2px rgba(0,0,0,0.08);overflow:hidden"><div style="width:5.0px;height:19px;background:#1565c9;border-radius:7px 0 0 7px"></div></div>
</div>
<div class="card" style="left:449px;top:926px;width:669px;height:463px"><div class="ch"></div><svg class="abs" style="left:25px;top:24px" width="30" height="30" viewBox="0 0 30 30"><circle cx="19" cy="10" r="9.5" fill="#1a6ad0"/><circle cx="21.5" cy="7.5" r="3" fill="#f7f7f7"/><path d="M12 13 L2 23 L2 28 L7 28 L7 25 L10 25 L10 22 L13 22 L16.5 18.5 Z" fill="#1a6ad0"/></svg><div class="ctitle" style="left:80px;top:25.5px;font-size:29px;line-height:29px;letter-spacing:-0.3px">Same Group</div><svg class="abs" style="left:538px;top:23.5px" width="20" height="26" viewBox="0 0 20 26"><path d="M3.2 8.2 C3.2 4.2 6.2 2.2 10 2.2 C14 2.2 16.6 4.6 16.6 7.6 C16.6 10.6 14.2 11.8 12.6 13 C11 14.2 10.4 15.2 10.4 17.2" fill="none" stroke="#d2d2d2" stroke-width="4.4"/><circle cx="10.2" cy="22.2" r="2.9" fill="#d2d2d2"/></svg><div class="abs" style="left:587px;top:21px;width:2px;height:29px;background:#dcdcdc"></div><svg class="abs" style="left:616px;top:23px" width="27" height="27" viewBox="0 0 27 27"><path d="M22.97 10.98 L26.90 11.20 L26.90 15.80 L22.97 16.02 L21.98 18.42 L24.60 21.35 L21.35 24.60 L18.42 21.98 L16.02 22.97 L15.80 26.90 L11.20 26.90 L10.98 22.97 L8.58 21.98 L5.65 24.60 L2.40 21.35 L5.02 18.42 L4.03 16.02 L0.10 15.80 L0.10 11.20 L4.03 10.98 L5.02 8.58 L2.40 5.65 L5.65 2.40 L8.58 5.02 L10.98 4.03 L11.20 0.10 L15.80 0.10 L16.02 4.03 L18.42 5.02 L21.35 2.40 L24.60 5.65 L21.98 8.58 Z" fill="#d2d2d2"/><circle cx="13.5" cy="13.5" r="10.2" fill="#d2d2d2"/><circle cx="13.5" cy="13.5" r="4.2" fill="#f7f7f7"/></svg>
<div class="abs" style="left:0;top:75.0px;width:669px;height:64.6px;background:#f9f9f9;"></div>
<div class="abs" style="left:0;top:139.6px;width:669px;height:64.6px;background:#fff;border-top:2px solid #ededed"></div>
<div class="abs" style="left:0;top:204.2px;width:669px;height:64.6px;background:#f9f9f9;border-top:2px solid #ededed"></div>
<div class="abs" style="left:0;top:268.8px;width:669px;height:64.6px;background:#fff;border-top:2px solid #ededed"></div>
<div class="abs" style="left:0;top:333.4px;width:669px;height:64.6px;background:#f9f9f9;border-top:2px solid #ededed"></div>
<div class="abs" style="left:0;top:398.0px;width:669px;height:64.6px;background:#fff;border-top:2px solid #ededed"></div>
<div class="abs" style="left:508px;top:75px;width:2px;height:390px;background:#e8e8e8"></div>
<div class="t" style="left:19.7px;top:93.3px;font-size:28px;line-height:28px;color:#111;font-weight:normal;">home improvement store</div>
<div class="t" style="right:22px;top:93.3px">9.650</div>
<div class="t" style="left:19.7px;top:157.9px;font-size:28px;line-height:28px;color:#111;font-weight:normal;">home improvement store near me</div>
<div class="t" style="right:22px;top:157.9px">150</div>
<div class="t" style="left:19.7px;top:222.5px;font-size:28px;line-height:28px;color:#111;font-weight:normal;">uk home improvement store</div>
<div class="t" style="right:22px;top:222.5px">60</div>
<div class="t" style="left:19.7px;top:287.1px;font-size:28px;line-height:28px;color:#111;font-weight:normal;">lowe s home improvement store</div>
<div class="t" style="right:22px;top:287.1px">20</div>
<div class="t" style="left:19.7px;top:351.7px;font-size:28px;line-height:28px;color:#111;font-weight:normal;">home improvement store london</div>
<div class="t" style="right:22px;top:351.7px">20</div>
<svg class="abs" style="left:19.7px;top:420px" width="10" height="17" viewBox="0 0 10 17"><path d="M0.5 0.5 L9 8.5 L0.5 16.5 Z" fill="#1a6ad0"/></svg>
<div class="t" style="left:43.7px;top:416.3px;font-size:28px;line-height:28px;color:#111;font-weight:normal;">Show all 205 similar keywords</div>
<div class="abs" style="left:19.7px;top:448.0px;width:399px;height:0;border-top:1.5px dotted #c8c8c8"></div>
</div>
<div class="card" style="left:1165px;top:926px;width:669px;height:463px"><div class="ch"></div><svg class="abs" style="left:25px;top:24px" width="30" height="30" viewBox="0 0 30 30"><circle cx="19" cy="10" r="9.5" fill="#1a6ad0"/><circle cx="21.5" cy="7.5" r="3" fill="#f7f7f7"/><path d="M12 13 L2 23 L2 28 L7 28 L7 25 L10 25 L10 22 L13 22 L16.5 18.5 Z" fill="#1a6ad0"/></svg><div class="ctitle" style="left:80px;top:25.5px;font-size:29px;line-height:29px;letter-spacing:-0.3px">Search Suggestions</div><svg class="abs" style="left:538px;top:23.5px" width="20" height="26" viewBox="0 0 20 26"><path d="M3.2 8.2 C3.2 4.2 6.2 2.2 10 2.2 C14 2.2 16.6 4.6 16.6 7.6 C16.6 10.6 14.2 11.8 12.6 13 C11 14.2 10.4 15.2 10.4 17.2" fill="none" stroke="#d2d2d2" stroke-width="4.4"/><circle cx="10.2" cy="22.2" r="2.9" fill="#d2d2d2"/></svg><div class="abs" style="left:587px;top:21px;width:2px;height:29px;background:#dcdcdc"></div><svg class="abs" style="left:616px;top:23px" width="27" height="27" viewBox="0 0 27 27"><path d="M22.97 10.98 L26.90 11.20 L26.90 15.80 L22.97 16.02 L21.98 18.42 L24.60 21.35 L21.35 24.60 L18.42 21.98 L16.02 22.97 L15.80 26.90 L11.20 26.90 L10.98 22.97 L8.58 21.98 L5.65 24.60 L2.40 21.35 L5.02 18.42 L4.03 16.02 L0.10 15.80 L0.10 11.20 L4.03 10.98 L5.02 8.58 L2.40 5.65 L5.65 2.40 L8.58 5.02 L10.98 4.03 L11.20 0.10 L15.80 0.10 L16.02 4.03 L18.42 5.02 L21.35 2.40 L24.60 5.65 L21.98 8.58 Z" fill="#d2d2d2"/><circle cx="13.5" cy="13.5" r="10.2" fill="#d2d2d2"/><circle cx="13.5" cy="13.5" r="4.2" fill="#f7f7f7"/></svg>
<div class="abs" style="left:0;top:75.0px;width:669px;height:64.6px;background:#f9f9f9;"></div>
<div class="abs" style="left:0;top:139.6px;width:669px;height:64.6px;background:#fff;border-top:2px solid #ededed"></div>
<div class="abs" style="left:0;top:204.2px;width:669px;height:64.6px;background:#f9f9f9;border-top:2px solid #ededed"></div>
<div class="abs" style="left:0;top:268.8px;width:669px;height:64.6px;background:#fff;border-top:2px solid #ededed"></div>
<div class="abs" style="left:0;top:333.4px;width:669px;height:64.6px;background:#f9f9f9;border-top:2px solid #ededed"></div>
<div class="abs" style="left:0;top:398.0px;width:669px;height:64.6px;background:#fff;border-top:2px solid #ededed"></div>
<div class="abs" style="left:508.5px;top:75px;width:2px;height:390px;background:#e8e8e8"></div>
<div class="t" style="left:21.0px;top:93.3px;font-size:28px;line-height:28px;color:#111;font-weight:normal;">home improvement store near me</div>
<div class="t" style="right:21px;top:93.3px">150</div>
<div class="t" style="left:21.0px;top:157.9px;font-size:28px;line-height:28px;color:#111;font-weight:normal;">home improvement store london</div>
<div class="t" style="right:21px;top:157.9px">20</div>
<div class="t" style="left:21.0px;top:222.5px;font-size:28px;line-height:28px;color:#111;font-weight:normal;">home improvement store meaning</div>
<div class="t" style="right:21px;top:222.5px">0</div>
<div class="t" style="left:21.0px;top:287.1px;font-size:28px;line-height:28px;color:#111;font-weight:normal;">home improvement stores ventura</div>
<div class="t" style="right:21px;top:287.1px">0</div>
<div class="t" style="left:21.0px;top:351.7px;font-size:28px;line-height:28px;color:#111;font-weight:normal;">home improvement store sales</div>
<div class="t" style="right:21px;top:351.7px">0</div>
<svg class="abs" style="left:21px;top:420px" width="10" height="17" viewBox="0 0 10 17"><path d="M0.5 0.5 L9 8.5 L0.5 16.5 Z" fill="#1a6ad0"/></svg>
<div class="t" style="left:45.0px;top:416.3px;font-size:28px;line-height:28px;color:#111;font-weight:normal;">Show all 207 related keywords</div>
<div class="abs" style="left:21px;top:448.0px;width:401px;height:0;border-top:1.5px dotted #c8c8c8"></div>
</div>
<div class="card" style="left:1882px;top:926px;width:670px;height:461px"><div class="ch"></div><svg class="abs" style="left:25px;top:24px" width="30" height="30" viewBox="0 0 30 30"><circle cx="19" cy="10" r="9.5" fill="#1a6ad0"/><circle cx="21.5" cy="7.5" r="3" fill="#f7f7f7"/><path d="M12 13 L2 23 L2 28 L7 28 L7 25 L10 25 L10 22 L13 22 L16.5 18.5 Z" fill="#1a6ad0"/></svg><div class="ctitle" style="left:80px;top:25.5px;font-size:29px;line-height:29px;letter-spacing:-0.3px">Questions</div><svg class="abs" style="left:539px;top:23.5px" width="20" height="26" viewBox="0 0 20 26"><path d="M3.2 8.2 C3.2 4.2 6.2 2.2 10 2.2 C14 2.2 16.6 4.6 16.6 7.6 C16.6 10.6 14.2 11.8 12.6 13 C11 14.2 10.4 15.2 10.4 17.2" fill="none" stroke="#d2d2d2" stroke-width="4.4"/><circle cx="10.2" cy="22.2" r="2.9" fill="#d2d2d2"/></svg><div class="abs" style="left:588px;top:21px;width:2px;height:29px;background:#dcdcdc"></div><svg class="abs" style="left:617px;top:23px" width="27" height="27" viewBox="0 0 27 27"><path d="M22.97 10.98 L26.90 11.20 L26.90 15.80 L22.97 16.02 L21.98 18.42 L24.60 21.35 L21.35 24.60 L18.42 21.98 L16.02 22.97 L15.80 26.90 L11.20 26.90 L10.98 22.97 L8.58 21.98 L5.65 24.60 L2.40 21.35 L5.02 18.42 L4.03 16.02 L0.10 15.80 L0.10 11.20 L4.03 10.98 L5.02 8.58 L2.40 5.65 L5.65 2.40 L8.58 5.02 L10.98 4.03 L11.20 0.10 L15.80 0.10 L16.02 4.03 L18.42 5.02 L21.35 2.40 L24.60 5.65 L21.98 8.58 Z" fill="#d2d2d2"/><circle cx="13.5" cy="13.5" r="10.2" fill="#d2d2d2"/><circle cx="13.5" cy="13.5" r="4.2" fill="#f7f7f7"/></svg>
<div class="abs" style="left:0;top:75.0px;width:670px;height:64.6px;background:#f9f9f9;"></div>
<div class="abs" style="left:0;top:139.6px;width:670px;height:64.6px;background:#fff;border-top:2px solid #ededed"></div>
<div class="abs" style="left:0;top:204.2px;width:670px;height:64.6px;background:#f9f9f9;border-top:2px solid #ededed"></div>
<div class="abs" style="left:0;top:268.8px;width:670px;height:64.6px;background:#fff;border-top:2px solid #ededed"></div>
<div class="abs" style="left:0;top:333.4px;width:670px;height:64.6px;background:#f9f9f9;border-top:2px solid #ededed"></div>
<div class="abs" style="left:0;top:398.0px;width:670px;height:64.6px;background:#fff;border-top:2px solid #ededed"></div>
<div class="t" style="left:-165.0px;width:1000px;text-align:center;top:222.5px;font-size:28px;line-height:28px;color:#111;font-weight:normal;">No results.</div>
</div>
<div class="card" style="left:449px;top:1438px;width:2103px;height:163px"><div class="ch"></div><svg class="abs" style="left:25px;top:22px" width="30" height="30" viewBox="0 0 30 30"><path d="M0.5 1 H29.5 L18 14 V28 L12 24.5 V14 Z" fill="#1a6ad0"/></svg><div class="ctitle" style="left:80px;top:25.5px;font-size:29px;line-height:29px;letter-spacing:-0.3px">SERP Features</div><svg class="abs" style="left:1972px;top:23.5px" width="20" height="26" viewBox="0 0 20 26"><path d="M3.2 8.2 C3.2 4.2 6.2 2.2 10 2.2 C14 2.2 16.6 4.6 16.6 7.6 C16.6 10.6 14.2 11.8 12.6 13 C11 14.2 10.4 15.2 10.4 17.2" fill="none" stroke="#d2d2d2" stroke-width="4.4"/><circle cx="10.2" cy="22.2" r="2.9" fill="#d2d2d2"/></svg><div class="abs" style="left:2021px;top:21px;width:2px;height:29px;background:#dcdcdc"></div><svg class="abs" style="left:2050px;top:23px" width="27" height="27" viewBox="0 0 27 27"><path d="M22.97 10.98 L26.90 11.20 L26.90 15.80 L22.97 16.02 L21.98 18.42 L24.60 21.35 L21.35 24.60 L18.42 21.98 L16.02 22.97 L15.80 26.90 L11.20 26.90 L10.98 22.97 L8.58 21.98 L5.65 24.60 L2.40 21.35 L5.02 18.42 L4.03 16.02 L0.10 15.80 L0.10 11.20 L4.03 10.98 L5.02 8.58 L2.40 5.65 L5.65 2.40 L8.58 5.02 L10.98 4.03 L11.20 0.10 L15.80 0.10 L16.02 4.03 L18.42 5.02 L21.35 2.40 L24.60 5.65 L21.98 8.58 Z" fill="#d2d2d2"/><circle cx="13.5" cy="13.5" r="10.2" fill="#d2d2d2"/><circle cx="13.5" cy="13.5" r="4.2" fill="#f7f7f7"/></svg>
<div class="abs" style="left:8.0px;top:92px;width:178.5px;height:55px;border-radius:28px;background:#f1f1f1;box-shadow:0 2px 2px rgba(0,0,0,0.13)"><svg class="abs" style="left:19px;top:14px" width="28" height="28" viewBox="0 0 28 28"><path d="M2 3.5 V12 L15.5 25.5 L25.5 15.5 L12 2 H3.5 Z" fill="none" stroke="#c4c4c4" stroke-width="2.4" stroke-linejoin="round"/><circle cx="8" cy="8" r="2" fill="none" stroke="#c4c4c4" stroke-width="2"/></svg><div class="t" style="left:59px;top:16.7px;color:#333">Organic</div></div>
<div class="abs" style="left:194.6px;top:92px;width:265.0px;height:55px;border-radius:28px;background:#f1f1f1;box-shadow:0 2px 2px rgba(0,0,0,0.13)"><svg class="abs" style="left:19px;top:14px" width="28" height="28" viewBox="0 0 28 28"><path d="M2 3.5 V12 L15.5 25.5 L25.5 15.5 L12 2 H3.5 Z" fill="none" stroke="#c4c4c4" stroke-width="2.4" stroke-linejoin="round"/><circle cx="8" cy="8" r="2" fill="none" stroke="#c4c4c4" stroke-width="2"/></svg><div class="t" style="left:59px;top:16.7px;color:#333">Find results on</div></div>
<div class="abs" style="left:467.7px;top:92px;width:239.3px;height:55px;border-radius:28px;background:#f1f1f1;box-shadow:0 2px 2px rgba(0,0,0,0.13)"><svg class="abs" style="left:19px;top:14px" width="28" height="28" viewBox="0 0 28 28"><path d="M2 3.5 V12 L15.5 25.5 L25.5 15.5 L12 2 H3.5 Z" fill="none" stroke="#c4c4c4" stroke-width="2.4" stroke-linejoin="round"/><circle cx="8" cy="8" r="2" fill="none" stroke="#c4c4c4" stroke-width="2"/></svg><div class="t" style="left:59px;top:16.7px;color:#333">Local search</div></div>
<div class="abs" style="left:715.0px;top:92px;width:247.0px;height:55px;border-radius:28px;background:#f1f1f1;box-shadow:0 2px 2px rgba(0,0,0,0.13)"><svg class="abs" style="left:19px;top:14px" width="28" height="28" viewBox="0 0 28 28"><path d="M2 3.5 V12 L15.5 25.5 L25.5 15.5 L12 2 H3.5 Z" fill="none" stroke="#c4c4c4" stroke-width="2.4" stroke-linejoin="round"/><circle cx="8" cy="8" r="2" fill="none" stroke="#c4c4c4" stroke-width="2"/></svg><div class="t" style="left:59px;top:16.7px;color:#333">Photo search</div></div>
</div>
<div class="card" style="left:449px;top:1650px;width:2103px;height:150px"><div class="ch"></div><svg class="abs" style="left:25px;top:25px" width="30" height="22" viewBox="0 0 30 22"><rect x="0" y="0" width="29.5" height="21.5" rx="3" fill="#1a6ad0"/><rect x="3.5" y="3.5" width="22.5" height="7" rx="1.5" fill="#fff"/><rect x="3.5" y="14" width="4.5" height="2.8" fill="#fff"/><rect x="10" y="14" width="4.5" height="2.8" fill="#fff"/></svg><div class="ctitle" style="left:80px;top:25.5px;font-size:29px;line-height:29px;letter-spacing:-0.3px">SERPs - home improvement store</div><svg class="abs" style="left:1972px;top:23.5px" width="20" height="26" viewBox="0 0 20 26"><path d="M3.2 8.2 C3.2 4.2 6.2 2.2 10 2.2 C14 2.2 16.6 4.6 16.6 7.6 C16.6 10.6 14.2 11.8 12.6 13 C11 14.2 10.4 15.2 10.4 17.2" fill="none" stroke="#d2d2d2" stroke-width="4.4"/><circle cx="10.2" cy="22.2" r="2.9" fill="#d2d2d2"/></svg><div class="abs" style="left:2021px;top:21px;width:2px;height:29px;background:#dcdcdc"></div><svg class="abs" style="left:2050px;top:23px" width="27" height="27" viewBox="0 0 27 27"><path d="M22.97 10.98 L26.90 11.20 L26.90 15.80 L22.97 16.02 L21.98 18.42 L24.60 21.35 L21.35 24.60 L18.42 21.98 L16.02 22.97 L15.80 26.90 L11.20 26.90 L10.98 22.97 L8.58 21.98 L5.65 24.60 L2.40 21.35 L5.02 18.42 L4.03 16.02 L0.10 15.80 L0.10 11.20 L4.03 10.98 L5.02 8.58 L2.40 5.65 L5.65 2.40 L8.58 5.02 L10.98 4.03 L11.20 0.10 L15.80 0.10 L16.02 4.03 L18.42 5.02 L21.35 2.40 L24.60 5.65 L21.98 8.58 Z" fill="#d2d2d2"/><circle cx="13.5" cy="13.5" r="10.2" fill="#d2d2d2"/><circle cx="13.5" cy="13.5" r="4.2" fill="#f7f7f7"/></svg></div>
<div class="abs" style="left:2468px;top:1598px;width:92px;height:92px;border-radius:50%;background:#fff;box-shadow:0 2px 8px rgba(0,0,0,0.22)"><svg class="abs" style="left:30px;top:22px" width="32" height="46" viewBox="0 0 32 46"><path d="M1.5 12 C3 5 8.5 1 16 1 C24.5 1 30.5 6 30.5 13.5 C30.5 20 26 22.5 22 25.5 C20 27 19.5 28.5 19.5 31 H11 C11 26.5 12 23.5 16.5 20 C19.5 17.8 21.5 16.5 21.5 13.5 C21.5 10.5 19.2 9 16 9 C12.8 9 10.8 10.8 9.5 14 Z" fill="#1a6ad0"/><circle cx="15.5" cy="39" r="6.5" fill="#1a6ad0"/></svg></div>
<div class="abs" style="left:2599px;top:0;width:1px;height:260px;background:#0c8cec"></div>
<div class="abs" style="left:0;top:1738px;width:2600px;height:2px;background:linear-gradient(90deg,#0c8cec,#0d42ae)"></div>
</body></html>
